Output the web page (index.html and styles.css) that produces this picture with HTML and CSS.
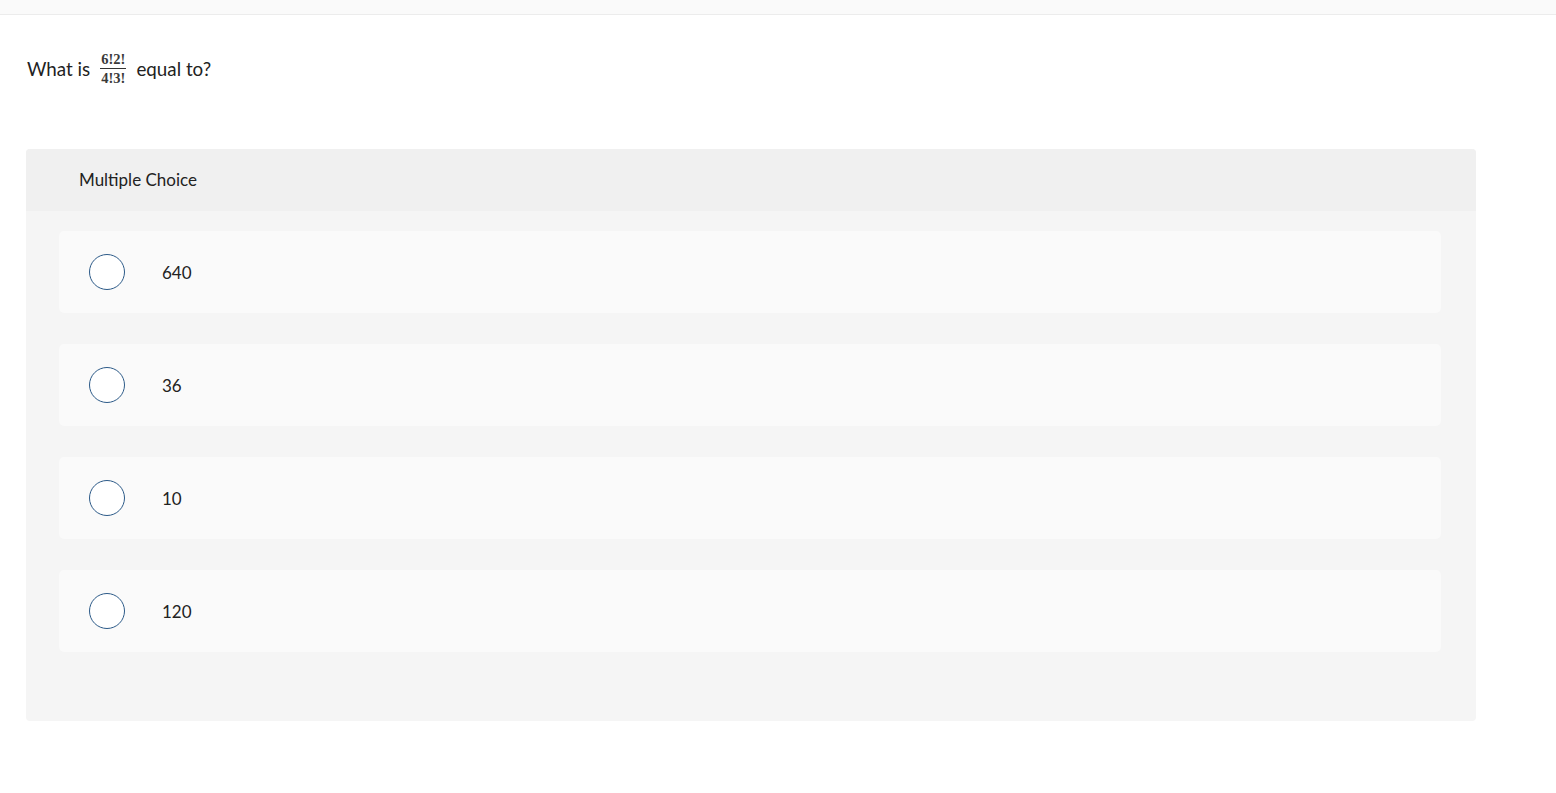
FILE: index.html
```html
<!DOCTYPE html>
<html>
<head>
<meta charset="utf-8">
<link rel="stylesheet" href="styles.css">
</head>
<body>
<div class="topbar"></div>
<main class="page">
  <div class="question">
    <span>What is</span>
    <span class="frac"><span class="num">6!2!</span><span class="den">4!3!</span></span>
    <span>equal to?</span>
  </div>
  <section class="card">
    <header class="card-head">Multiple Choice</header>
    <div class="card-body">
      <div class="option"><span class="radio"></span><span class="label">640</span></div>
      <div class="option"><span class="radio"></span><span class="label">36</span></div>
      <div class="option"><span class="radio"></span><span class="label">10</span></div>
      <div class="option"><span class="radio"></span><span class="label">120</span></div>
    </div>
  </section>
</main>
</body>
</html>
```

FILE: styles.css
```css
* { box-sizing: border-box; }
html, body { margin: 0; padding: 0; background: #fff; }
body {
  font-family: Lato, "Open Sans", "Liberation Sans", sans-serif;
  color: #222;
}
.topbar {
  height: 15px;
  background: #fafafa;
  border-bottom: 1px solid #ececec;
}
.page {
  padding: 0 80px 0 26px;
  width: 1556px;
}
.question {
  display: flex;
  align-items: center;
  gap: 10px;
  margin-top: 35px;
  margin-left: 1px;
  height: 36px;
  font-size: 18.8px;
  color: #222;
}
.frac {
  display: inline-flex;
  flex-direction: column;
  align-items: center;
  font-family: "Liberation Serif", "DejaVu Serif", serif;
  font-size: 14.5px;
  font-weight: bold;
  color: #3a3a3a;
  line-height: 14px;
  margin-top: 1px;
}
.frac .num {
  padding: 0 1px 2px;
  border-bottom: 1px solid #333;
}
.frac .den { padding-top: 2px; }
.card {
  margin-top: 63px;
  width: 1450px;
  border-radius: 4px;
  background: #f5f5f5;
  overflow: hidden;
}
.card-head {
  height: 62px;
  background: #f0f0f0;
  padding-left: 53px;
  padding-bottom: 2px;
  display: flex;
  align-items: center;
  font-size: 17px;
  color: #222;
}
.card-body {
  padding: 20px 35px 69px 33px;
  display: flex;
  flex-direction: column;
  gap: 31px;
}
.option {
  height: 82px;
  background: #fafafa;
  border-radius: 5px;
  display: flex;
  align-items: center;
  padding-left: 30px;
}
.radio {
  width: 36px;
  height: 36px;
  border-radius: 50%;
  border: 1.5px solid #2c5a88;
  background: #fff;
  flex: none;
}
.label {
  margin-left: 37px;
  font-size: 17px;
  color: #222;
}
```
